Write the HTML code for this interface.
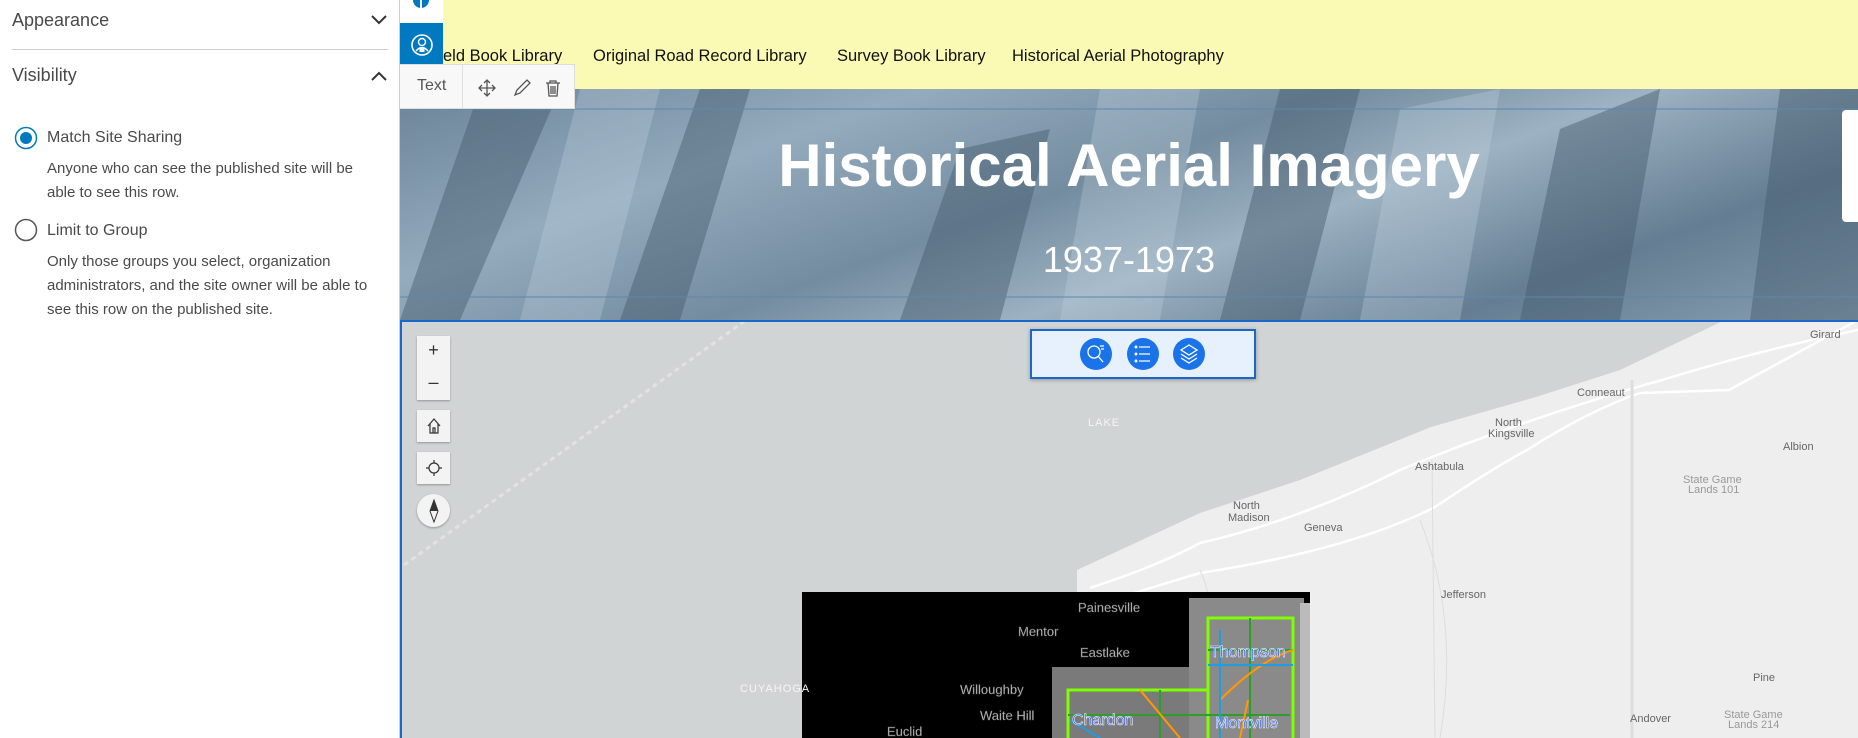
<!DOCTYPE html>
<html><head><meta charset="utf-8"><style>
*{margin:0;padding:0;box-sizing:border-box}
body{width:1858px;height:738px;overflow:hidden;background:#fff;font-family:"Liberation Sans",sans-serif;position:relative}
.abs{position:absolute}
#left{left:0;top:0;width:400px;height:738px;background:#fff;border-right:1px solid #cfcfcf}
.lt{color:#4a4a4a;font-size:18px}
.desc{color:#4a4a4a;font-size:15px;line-height:24px;left:47px;width:332px}
#yellow{left:443px;top:0;width:1415px;height:89px;background:#fafab4}
.nav{top:47px;font-size:16.5px;color:#111}
#hero{left:400px;top:89px;width:1458px;height:231px;overflow:hidden;
background:linear-gradient(160deg,#6a8398 0%,#94abbd 25%,#738c9f 45%,#9db2c2 60%,#647d92 80%,#87a0b2 100%)}
</style></head><body>
<div id="left" class="abs">
  <div class="abs lt" style="left:12px;top:10px">Appearance</div>
  <svg class="abs" style="left:370px;top:14px" width="18" height="12"><path d="M2 2 L9 9 L16 2" stroke="#333" stroke-width="2" fill="none"/></svg>
  <div class="abs" style="left:12px;top:49px;width:376px;height:1px;background:#ccc"></div>
  <div class="abs lt" style="left:12px;top:65px">Visibility</div>
  <svg class="abs" style="left:370px;top:70px" width="18" height="12"><path d="M2 10 L9 3 L16 10" stroke="#333" stroke-width="2" fill="none"/></svg>
  <svg class="abs" style="left:14px;top:126px" width="26" height="26"><circle cx="12" cy="12" r="10.5" fill="#fff" stroke="#0079c1" stroke-width="1.5"/><circle cx="12" cy="12" r="6" fill="#0079c1"/></svg>
  <div class="abs lt" style="left:47px;top:129px;font-size:16px">Match Site Sharing</div>
  <div class="abs desc" style="top:157px">Anyone who can see the published site will be able to see this row.</div>
  <svg class="abs" style="left:14px;top:218px" width="26" height="26"><circle cx="12" cy="12" r="10.5" fill="#fff" stroke="#555" stroke-width="1.5"/></svg>
  <div class="abs lt" style="left:47px;top:222px;font-size:16px">Limit to Group</div>
  <div class="abs desc" style="top:250px">Only those groups you select, organization administrators, and the site owner will be able to see this row on the published site.</div>
</div>

<div id="yellow" class="abs">
  <div class="abs nav" style="left:0">eld Book Library</div>
  <div class="abs nav" style="left:150px">Original Road Record Library</div>
  <div class="abs nav" style="left:394px">Survey Book Library</div>
  <div class="abs nav" style="left:569px">Historical Aerial Photography</div>
</div>
<div class="abs" style="left:400px;top:0;width:43px;height:23px;background:#fff"></div>
<svg class="abs" style="left:410px;top:0" width="22" height="12"><path d="M3 0 A8 8 0 0 0 19 0 Z" fill="#0079c1"/><rect x="10" y="0" width="2" height="8" fill="#fff"/></svg>
<div class="abs" style="left:400px;top:23px;width:43px;height:44px;background:#0079c1"></div>
<svg class="abs" style="left:410px;top:33px" width="24" height="24"><circle cx="12" cy="12" r="10" stroke="#fff" stroke-width="1.6" fill="none"/><circle cx="12" cy="9" r="3.5" stroke="#fff" stroke-width="1.4" fill="none"/><path d="M6 18 Q12 11 18 18" stroke="#fff" stroke-width="1.4" fill="none"/><rect x="9.5" y="15" width="5" height="4" fill="#fff"/></svg>

<div id="hero" class="abs">
  <svg class="abs" style="left:0;top:0" width="1458" height="231">
    <g fill="#445b6d" opacity=".45">
      <polygon points="80,0 160,0 60,231 0,231"/>
      <polygon points="300,0 350,0 280,231 220,231"/>
      <polygon points="560,60 650,40 600,231 500,231"/>
      <polygon points="880,0 960,0 900,231 820,231"/>
      <polygon points="1160,40 1260,0 1220,231 1120,231"/>
      <polygon points="1380,0 1458,0 1458,231 1350,231"/>
    </g>
    <g fill="#c5d5e0" opacity=".3">
      <polygon points="180,0 260,0 200,231 120,231"/>
      <polygon points="700,0 800,0 760,231 660,231"/>
      <polygon points="1000,20 1100,0 1060,231 960,231"/>
    </g>
    <line x1="0" y1="20" x2="1458" y2="20" stroke="#5f86b0" stroke-width="1"/>
    <line x1="0" y1="208" x2="1458" y2="208" stroke="#5f86b0" stroke-width="1"/>
  </svg>
  <div class="abs" style="left:0;width:1458px;top:42px;text-align:center;color:#fff;font-size:60px;font-weight:bold">Historical Aerial Imagery</div>
  <div class="abs" style="left:0;width:1458px;top:150px;text-align:center;color:#fff;font-size:36px;font-weight:300">1937-1973</div>
  <div class="abs" style="left:1442px;top:21px;width:16px;height:112px;background:#fff;border-radius:4px 0 0 4px"></div>
</div>
<div class="abs" style="left:400px;top:64px;width:175px;height:45px;background:#f8f8f8;border:1px solid #ddd;border-left:none"></div>
<div class="abs" style="left:417px;top:77px;font-size:16px;color:#555">Text</div>
<div class="abs" style="left:462px;top:65px;width:1px;height:44px;background:#e0e0e0"></div>
<svg class="abs" style="left:478px;top:78px" width="90" height="20" fill="none" stroke="#555" stroke-width="1.3">
  <path d="M9 2 V18 M1 10 H17 M6 5 L9 2 L12 5 M6 15 L9 18 L12 15 M4 7 L1 10 L4 13 M14 7 L17 10 L14 13"/>
  <path d="M37 17 L39 12 L49 2 L52 5 L42 15 Z"/>
  <path d="M68 5 H82 M72 5 V3 H78 V5 M70 5 L71 18 H79 L80 5 M73 8 V16 M75 8 V16 M77 8 V16"/>
</svg>

<svg class="abs" style="left:400px;top:320px" width="1458" height="418">
  <rect width="1458" height="418" fill="#d1d4d4"/>
  <polygon points="1325,0 1458,0 1458,418 402,418 402,272 677,272 677,250 800,193 900,160 1031,107 1136,77 1220,50" fill="#eeeeee"/>
  <g stroke="#fff" stroke-width="2.5" fill="none">
    <path d="M680,290 Q750,268 800,253 Q950,230 1035,187 Q1090,150 1127,130 Q1190,90 1240,73 L1329,70 L1458,0"/>
    <path d="M690,268 Q760,245 800,223 Q900,200 1000,150 Q1120,100 1262,60 Q1360,30 1458,10"/>
  </g>
  <g stroke="#ddd" stroke-width="1" fill="none">
    <path d="M1032,140 L1035,418"/><path d="M1232,60 L1232,418" stroke-width="3"/>
    <path d="M1020,200 Q1060,300 1040,418"/><path d="M800,250 Q830,320 800,418"/>
  </g>
  <line x1="4" y1="245" x2="346" y2="0" stroke="#e2e2e2" stroke-width="3" stroke-dasharray="5,4"/>
  <rect x="402" y="272" width="508" height="146" fill="#000"/>
  <rect x="652" y="347" width="160" height="71" fill="#7a7a7a"/>
  <rect x="789" y="278" width="115" height="140" fill="#8a8a8a"/>
  <rect x="900" y="283" width="10" height="135" fill="#bbb"/>
  <g stroke="#7fff00" stroke-width="3" fill="none">
    <rect x="668" y="370" width="140" height="60"/><rect x="808" y="298" width="85" height="130"/>
  </g>
  <g stroke="#2aa02a" stroke-width="2" fill="none"><path d="M668,395 H890 M808,330 H893 M760,370 V418 M850,298 V418"/></g>
  <g stroke="#ff9900" stroke-width="2" fill="none"><path d="M740,370 L780,418 M820,380 Q860,340 893,330 M848,380 L840,418"/></g>
  <g stroke="#1e9ee0" stroke-width="2" fill="none"><path d="M808,345 H893 M820,310 V418 M670,400 L700,418"/></g>
  <g font-family="Liberation Sans,sans-serif" font-size="13" fill="#ccc" stroke="#555" stroke-width=".4">
    <text x="680" y="337">Eastlake</text><text x="618" y="316">Mentor</text><text x="678" y="292" >Painesville</text>
    <text x="560" y="374">Willoughby</text><text x="580" y="400">Waite Hill</text><text x="487" y="416">Euclid</text>
  </g>
  <g font-family="Liberation Sans,sans-serif" font-size="16" fill="#3366ff" stroke="#fff" stroke-width=".5">
    <text x="810" y="337">Thompson</text><text x="672" y="405">Chardon</text><text x="815" y="408">Montville</text>
  </g>
  <g font-family="Liberation Sans,sans-serif" font-size="11" fill="#666">
    <text x="340" y="372" fill="#f5f5f5" letter-spacing="1">CUYAHOGA</text>
    <text x="688" y="106" fill="#f5f5f5" letter-spacing="1">LAKE</text>
    <text x="833" y="189">North</text><text x="828" y="201">Madison</text>
    <text x="904" y="211">Geneva</text><text x="1015" y="150">Ashtabula</text>
    <text x="1095" y="106">North</text><text x="1088" y="117">Kingsville</text>
    <text x="1177" y="76">Conneaut</text><text x="1410" y="18">Girard</text>
    <text x="1383" y="130">Albion</text><text x="1041" y="278">Jefferson</text>
    <text x="1230" y="402">Andover</text><text x="1353" y="361">Pine</text>
    <text x="1283" y="163" fill="#999">State Game</text><text x="1288" y="173" fill="#999">Lands 101</text>
    <text x="1324" y="398" fill="#999">State Game</text><text x="1328" y="408" fill="#999">Lands 214</text>
  </g>
  <rect x="0" y="0" width="1458" height="2" fill="#1a66c9"/><rect x="0" y="0" width="2" height="418" fill="#1a66c9"/>
</svg>

<div class="abs" style="left:417px;top:336px;width:33px;height:64px;background:#f3f3f3;box-shadow:0 1px 2px rgba(0,0,0,.3)"></div>
<div class="abs" style="left:417px;top:340px;width:33px;text-align:center;font-size:18px;color:#333">+</div>
<div class="abs" style="left:417px;top:372px;width:33px;text-align:center;font-size:18px;color:#333">–</div>
<div class="abs" style="left:417px;top:410px;width:33px;height:32px;background:#f3f3f3;box-shadow:0 1px 2px rgba(0,0,0,.3)"></div>
<svg class="abs" style="left:425px;top:417px" width="18" height="18" fill="none" stroke="#333" stroke-width="1.2"><path d="M3 9 L9 2 L15 9 M5 7 V16 H13 V7 M8 16 V11 H10 V16"/></svg>
<div class="abs" style="left:417px;top:452px;width:33px;height:32px;background:#f3f3f3;box-shadow:0 1px 2px rgba(0,0,0,.3)"></div>
<svg class="abs" style="left:425px;top:459px" width="18" height="18" fill="none" stroke="#333" stroke-width="1.2"><circle cx="9" cy="9" r="5"/><path d="M9 1 V4 M9 14 V17 M1 9 H4 M14 9 H17"/></svg>
<div class="abs" style="left:417px;top:494px;width:33px;height:33px;background:#f3f3f3;border-radius:50%;box-shadow:0 1px 2px rgba(0,0,0,.3)"></div>
<svg class="abs" style="left:425px;top:499px" width="18" height="24"><path d="M9 1 L13 12 L9 23 L5 12 Z" fill="none" stroke="#333"/><path d="M9 1 L13 12 H5 Z" fill="#333"/></svg>

<div class="abs" style="left:1030px;top:329px;width:226px;height:50px;background:#e6f1fd;border:2px solid #1a66c9;box-shadow:0 1px 4px rgba(0,0,0,.3)"></div>
<svg class="abs" style="left:1080px;top:337px" width="126" height="34">
  <circle cx="16" cy="17" r="16" fill="#1a73e8"/><circle cx="63" cy="17" r="16" fill="#1a73e8"/><circle cx="109" cy="17" r="16" fill="#1a73e8"/>
  <g stroke="#fff" stroke-width="1.3" fill="none">
    <circle cx="14" cy="15" r="6"/><path d="M18 19 L23 25 M20 9 H24 M21 12 H24"/>
    <path d="M59 10 H70 M59 17 H70 M59 24 H70"/><circle cx="56" cy="10" r=".8"/><circle cx="56" cy="17" r=".8"/><circle cx="56" cy="24" r=".8"/>
    <path d="M109 8 L117 13 L109 18 L101 13 Z M101 17 L109 22 L117 17 M101 21 L109 26 L117 21"/>
  </g>
</svg>
</body></html>
